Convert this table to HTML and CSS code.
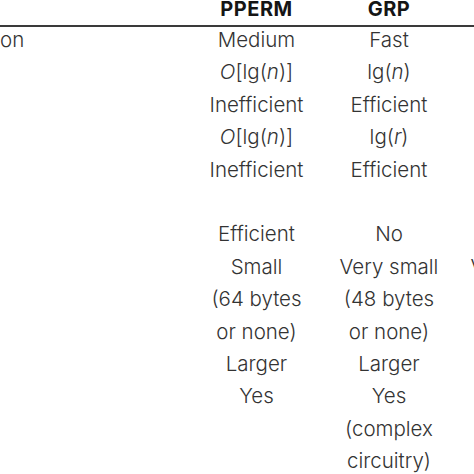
FILE: index.html
```html
<!DOCTYPE html>
<html>
<head>
<meta charset="utf-8">
<link rel="stylesheet" href="styles.css">
</head>
<body>
<div class="table">
  <div class="head">
    <div class="cell label"></div>
    <div class="cell">PPERM</div>
    <div class="cell">GRP</div>
    <div class="cell"></div>
  </div>
  <div class="body">
    <div class="row"><div class="cell label">on</div><div class="cell">Medium</div><div class="cell">Fast</div><div class="cell"></div></div>
    <div class="row"><div class="cell label"></div><div class="cell"><i>O</i>[lg(<i>n</i>)]</div><div class="cell">lg(<i>n</i>)</div><div class="cell"></div></div>
    <div class="row"><div class="cell label"></div><div class="cell">Inefficient</div><div class="cell">Efficient</div><div class="cell"></div></div>
    <div class="row"><div class="cell label"></div><div class="cell"><i>O</i>[lg(<i>n</i>)]</div><div class="cell">lg(<i>r</i>)</div><div class="cell"></div></div>
    <div class="row"><div class="cell label"></div><div class="cell">Inefficient</div><div class="cell">Efficient</div><div class="cell"></div></div>
    <div class="row"><div class="cell label"></div><div class="cell">&nbsp;</div><div class="cell"></div><div class="cell"></div></div>
    <div class="row"><div class="cell label"></div><div class="cell">Efficient</div><div class="cell">No</div><div class="cell"></div></div>
    <div class="row"><div class="cell label"></div><div class="cell">Small<br>(64 bytes<br>or none)</div><div class="cell">Very small<br>(48 bytes<br>or none)</div><div class="cell">Very small</div></div>
    <div class="row"><div class="cell label"></div><div class="cell">Larger</div><div class="cell">Larger</div><div class="cell"></div></div>
    <div class="row"><div class="cell label"></div><div class="cell">Yes</div><div class="cell">Yes<br>(complex<br>circuitry)</div><div class="cell"></div></div>
  </div>
</div>
</body>
</html>
```
FILE: styles.css
```css
html, body {
  margin: 0;
  padding: 0;
  background: #ffffff;
  overflow: hidden;
  width: 474px;
  height: 474px;
}
.table {
  width: 620px;
  font-family: "Inter", "Liberation Sans", sans-serif;
  color: #333333;
}
.head, .row {
  display: grid;
  grid-template-columns: 190px 133px 132px 130px;
}
.head {
  font-weight: 700;
  font-size: 20px;
  letter-spacing: 0.5px;
  color: #151515;
  line-height: 18px;
  height: 25px;
  border-bottom: 2px solid #3a3a3a;
}
.body {
  font-weight: 300;
  font-size: 20.5px;
  line-height: 32.4px;
  margin-top: -3px;
}
.cell {
  text-align: center;
  white-space: nowrap;
}
.cell.label {
  text-align: left;
}
i {
  font-style: italic;
}
```
